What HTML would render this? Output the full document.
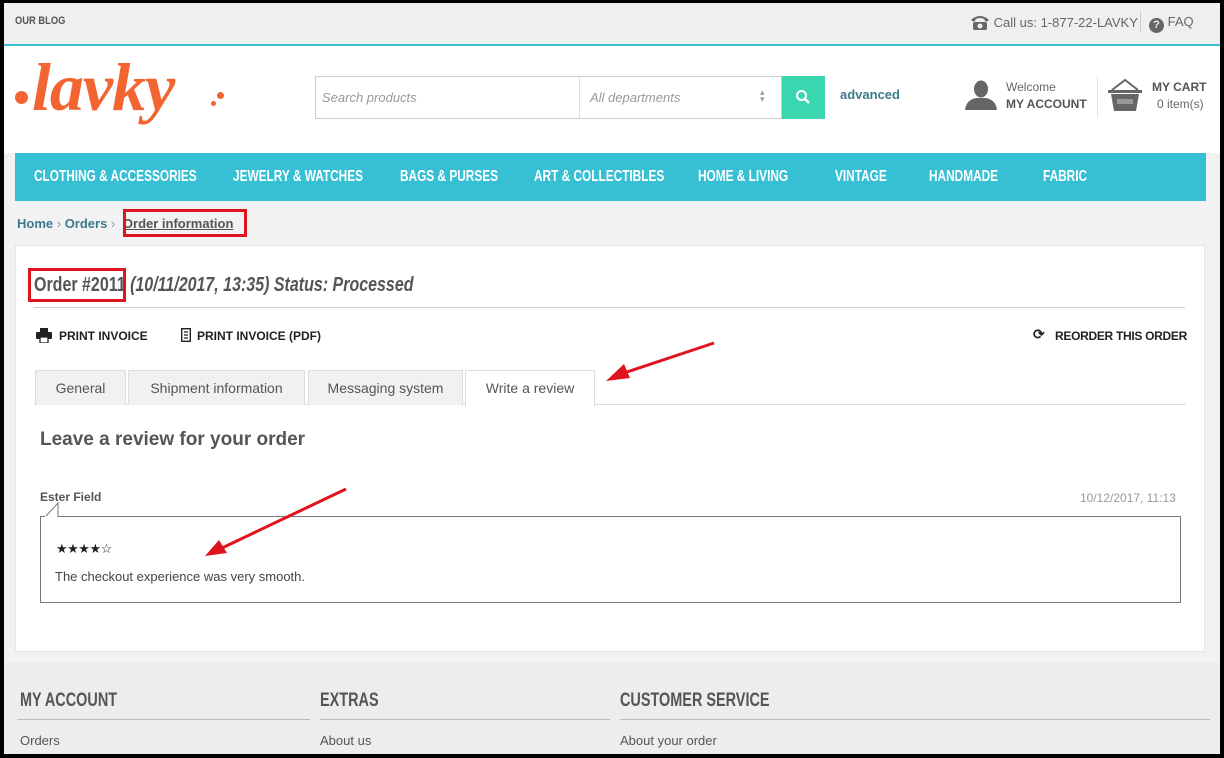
<!DOCTYPE html>
<html><head><meta charset="utf-8"><style>
*{margin:0;padding:0;box-sizing:border-box}
body{width:1224px;height:758px;overflow:hidden;background:#fff;font-family:"Liberation Sans",sans-serif;position:relative;color:#333}
.a{position:absolute}
.n{font-weight:bold;transform-origin:0 0;white-space:nowrap}
.frame{position:absolute;left:0;top:0;width:1224px;height:758px;border:4px solid #000;border-top-width:3px;z-index:50;pointer-events:none}
.red{position:absolute;border:3px solid #e0141e;z-index:20}
.tab{position:absolute;top:370px;height:35px;background:#f1f1f1;border:1px solid #ddd;border-bottom:none;font-size:14px;color:#555;text-align:center;line-height:35px}
.nv{position:absolute;top:168px;font-size:16px;color:#fff;font-weight:bold;transform:scaleX(.74);transform-origin:0 0;white-space:nowrap}
</style></head><body>
<div class="frame"></div>
<div class="a" style="left:0;top:0;width:1224px;height:44px;background:#efefef"></div>
<div class="a" style="left:0;top:44px;width:1224px;height:2px;background:#3bbfd3"></div>
<div class="a n" style="left:15px;top:15px;font-size:11px;color:#555;transform:scaleX(.85)">OUR BLOG</div>
<div class="a" style="left:970px;top:14px;font-size:13px;color:#666">
<svg width="20" height="16" style="vertical-align:-3px" viewBox="0 0 20 16"><path d="M1 6 Q10 -2 19 6 L16 8 L14 5 Q10 3 6 5 L4 8Z" fill="#666"/><rect x="3" y="8" width="14" height="8" rx="2" fill="#666"/><circle cx="10" cy="12" r="2.5" fill="#efefef"/></svg> Call us: 1-877-22-LAVKY</div>
<div class="a" style="left:1140px;top:11px;width:1px;height:22px;background:#ccc"></div>
<div class="a" style="left:1149px;top:14px;font-size:13px;color:#666"><span style="display:inline-block;width:15px;height:15px;border-radius:50%;background:#666;color:#efefef;font-weight:bold;font-size:11px;text-align:center;line-height:15px;vertical-align:-2px">?</span> FAQ</div>
<div class="a" style="left:15px;top:91px;width:13px;height:13px;border-radius:50%;background:#f26532"></div>
<div class="a" style="left:32px;top:48px;font-family:'Liberation Serif',serif;font-style:italic;font-weight:bold;font-size:68px;color:#f26532;letter-spacing:-1px">lavky</div>
<div class="a" style="left:217px;top:92px;width:7px;height:7px;border-radius:50%;background:#f26532"></div>
<div class="a" style="left:211px;top:101px;width:5px;height:5px;border-radius:50%;background:#f26532"></div>
<div class="a" style="left:315px;top:76px;width:467px;height:43px;border:1px solid #ccc;background:#fff"></div>
<div class="a" style="left:579px;top:77px;width:1px;height:41px;background:#ddd"></div>
<div class="a" style="left:322px;top:90px;font-size:13px;font-style:italic;color:#999">Search products</div>
<div class="a" style="left:590px;top:90px;font-size:13px;font-style:italic;color:#999">All departments</div>
<div class="a" style="left:760px;top:89px;font-size:9px;color:#999;line-height:7px">▴<br>▾</div>
<div class="a" style="left:782px;top:76px;width:43px;height:43px;background:#3ad6b0"></div>
<svg class="a" style="left:795px;top:89px" width="16" height="16" viewBox="0 0 16 16"><circle cx="6.5" cy="6.5" r="4.5" fill="none" stroke="#fff" stroke-width="2"/><path d="M10 10 L14 14" stroke="#fff" stroke-width="2.5"/></svg>
<div class="a" style="left:840px;top:87px;font-size:13px;font-weight:bold;color:#3a7a8a">advanced</div>
<svg class="a" style="left:964px;top:80px" width="34" height="30" viewBox="0 0 34 30"><ellipse cx="17" cy="9" rx="7" ry="8.5" fill="#666"/><path d="M1 30 Q2 20 12 18 L22 18 Q32 20 33 30Z" fill="#666"/></svg>
<div class="a" style="left:1006px;top:80px;font-size:12px;color:#666">Welcome</div>
<div class="a" style="left:1006px;top:97px;font-size:12px;font-weight:bold;color:#555">MY ACCOUNT</div>
<div class="a" style="left:1097px;top:76px;width:1px;height:42px;background:#e5e5e5"></div>
<svg class="a" style="left:1107px;top:78px" width="36" height="34" viewBox="0 0 36 34"><path d="M5 12 L18 2 L31 12" fill="none" stroke="#666" stroke-width="2"/><rect x="1" y="12" width="34" height="3" fill="#666"/><path d="M4 16 L32 16 L29 33 L7 33Z" fill="#666"/><rect x="10" y="21" width="16" height="5" fill="#999"/></svg>
<div class="a" style="left:1152px;top:80px;font-size:12px;font-weight:bold;color:#555">MY CART</div>
<div class="a" style="left:1157px;top:97px;font-size:12px;color:#666">0 item(s)</div>
<div class="a" style="left:0;top:153px;width:1224px;height:605px;background:#f2f2f2"></div>
<div class="a" style="left:15px;top:153px;width:1191px;height:48px;background:#37bfd4"></div>
<span class="nv" style="left:34px">CLOTHING &amp; ACCESSORIES</span><span class="nv" style="left:233px">JEWELRY &amp; WATCHES</span><span class="nv" style="left:400px">BAGS &amp; PURSES</span><span class="nv" style="left:534px">ART &amp; COLLECTIBLES</span><span class="nv" style="left:698px">HOME &amp; LIVING</span><span class="nv" style="left:835px">VINTAGE</span><span class="nv" style="left:929px">HANDMADE</span><span class="nv" style="left:1043px">FABRIC</span>
<div class="a" style="left:17px;top:216px;font-size:13px;font-weight:bold;color:#3a7a8a">Home <span style="color:#999;font-weight:normal">›</span> Orders <span style="color:#999;font-weight:normal">›</span> <span style="color:#555;text-decoration:underline;margin-left:4px">Order information</span></div>
<div class="red" style="left:123px;top:209px;width:124px;height:28px"></div>
<div class="a" style="left:15px;top:245px;width:1190px;height:407px;background:#fff;border:1px solid #e5e5e5"></div>
<div class="a n" style="left:34px;top:274px;font-size:20px;color:#555;transform:scaleX(.8)">Order #2011 <i>(10/11/2017, 13:35) Status: Processed</i></div>
<div class="red" style="left:28px;top:268px;width:98px;height:34px"></div>
<div class="a" style="left:34px;top:307px;width:1151px;height:1px;background:#ccc"></div>
<svg class="a" style="left:36px;top:328px" width="16" height="15" viewBox="0 0 16 15"><rect x="4" y="0" width="8" height="4" fill="#222"/><rect x="0" y="4" width="16" height="7" rx="1" fill="#222"/><rect x="4" y="9" width="8" height="6" fill="#fff" stroke="#222" stroke-width="1.3"/></svg>
<div class="a" style="left:59px;top:329px;font-size:12px;font-weight:bold;color:#222">PRINT INVOICE</div>
<svg class="a" style="left:181px;top:328px" width="10" height="14" viewBox="0 0 10 14"><rect x="0.7" y="0.7" width="8.6" height="12.6" fill="none" stroke="#222" stroke-width="1.4"/><path d="M3 4h4M3 7h4M3 10h4" stroke="#222" stroke-width="1.2"/></svg>
<div class="a" style="left:197px;top:329px;font-size:12px;font-weight:bold;color:#222">PRINT INVOICE (PDF)</div>
<div class="a" style="left:1033px;top:326px;font-size:14px;font-weight:bold;color:#222">⟳</div>
<div class="a" style="left:1055px;top:329px;font-size:12px;font-weight:bold;color:#222;letter-spacing:-0.3px">REORDER THIS ORDER</div>
<div class="a" style="left:34px;top:404px;width:1152px;height:1px;background:#ddd"></div>
<div class="tab" style="left:35px;width:91px">General</div>
<div class="tab" style="left:128px;width:177px">Shipment information</div>
<div class="tab" style="left:308px;width:155px">Messaging system</div>
<div class="tab" style="left:465px;width:130px;background:#fff;height:36px">Write a review</div>
<div class="a" style="left:40px;top:429px;font-size:19px;font-weight:bold;color:#555">Leave a review for your order</div>
<div class="a" style="left:40px;top:490px;font-size:12px;font-weight:bold;color:#555">Ester Field</div>
<div class="a" style="left:1080px;top:491px;font-size:12px;color:#999">10/12/2017, 11:13</div>
<div class="a" style="left:40px;top:516px;width:1141px;height:87px;border:1px solid #777"></div>
<svg class="a" style="left:45px;top:502px" width="26" height="16" viewBox="0 0 26 16"><path d="M0 15 L13 1 L13 15" fill="#fff" stroke="#777"/><rect x="0" y="14" width="12.5" height="3" fill="#fff"/></svg>
<div class="a" style="left:56px;top:541px;font-size:13px;color:#222;letter-spacing:-0.5px">★★★★☆</div>
<div class="a" style="left:55px;top:569px;font-size:13px;color:#444">The checkout experience was very smooth.</div>
<svg class="a" style="left:0;top:0;z-index:30" width="1224" height="758"><path d="M714 343 L624 373" stroke="#e0141e" stroke-width="3"/><path d="M606 381 L624 364 L630 378Z" fill="#e0141e"/><path d="M346 489 L222 548" stroke="#e0141e" stroke-width="3"/><path d="M205 556 L219 540 L227 553Z" fill="#e0141e"/></svg>
<div class="a" style="left:0;top:662px;width:1224px;height:96px;background:#ededed"></div>
<div class="a n" style="left:20px;top:690px;font-size:19px;color:#555;transform:scaleX(.76)">MY ACCOUNT</div>
<div class="a n" style="left:320px;top:690px;font-size:19px;color:#555;transform:scaleX(.76)">EXTRAS</div>
<div class="a n" style="left:620px;top:690px;font-size:19px;color:#555;transform:scaleX(.76)">CUSTOMER SERVICE</div>
<div class="a" style="left:17px;top:719px;width:293px;height:1px;background:#bbb"></div>
<div class="a" style="left:320px;top:719px;width:290px;height:1px;background:#bbb"></div>
<div class="a" style="left:620px;top:719px;width:590px;height:1px;background:#bbb"></div>
<div class="a" style="left:20px;top:733px;font-size:13px;color:#555">Orders</div>
<div class="a" style="left:320px;top:733px;font-size:13px;color:#555">About us</div>
<div class="a" style="left:620px;top:733px;font-size:13px;color:#555">About your order</div>
</body></html>
